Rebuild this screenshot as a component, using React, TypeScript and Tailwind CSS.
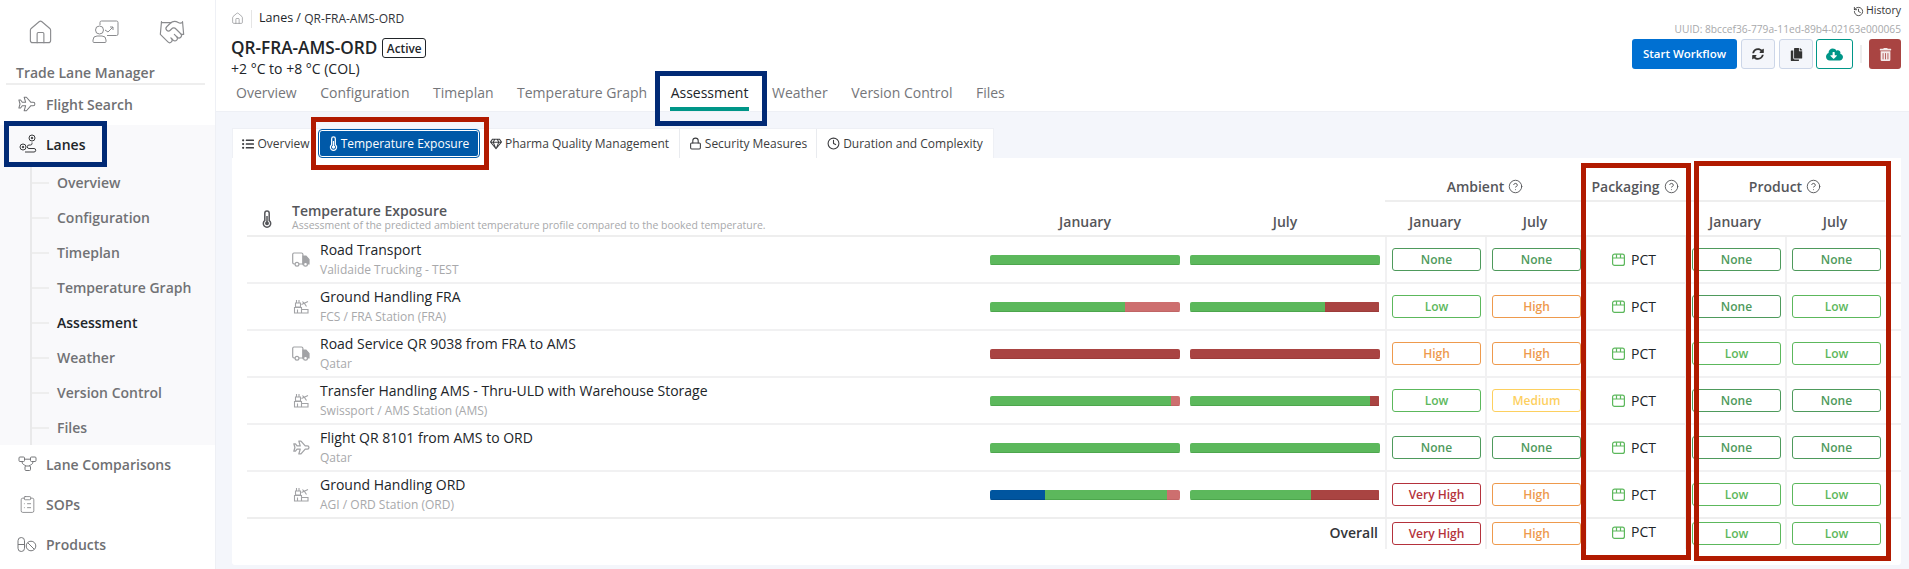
import React from "react";
import { Home, Handshake, Clock, Lock, History, CircleHelp, ClipboardList } from "lucide-react";
import { FaSyncAlt, FaCopy, FaTrashAlt, FaCloudDownloadAlt, FaListUl, FaRegGem } from "react-icons/fa";

const PresentIcon = () => (
  <svg width="28" height="24" viewBox="0 0 28 24" fill="none" stroke="#8a8b8e" strokeWidth="1">
    <path d="M8 5V2.500A1.500 1.500 0 0 1 9.500 1h15A1.500 1.500 0 0 1 26 2.500V14a1.500 1.500 0 0 1-1.500 1.500H15" />
    <circle cx="7.500" cy="10" r="4" />
    <path d="M1 21.500v-1.500a4 4 0 0 1 4-4h5a4 4 0 0 1 4 4v1.500a1 1 0 0 1-1 1H2a1 1 0 0 1-1-1z" />
    <path d="M13 10l3 2 5-5M18 7h3v3" />
  </svg>
);
const RouteIcon = () => (
  <svg width="18" height="20" viewBox="0 0 18 20" fill="none" stroke="#3a3b3d" strokeWidth="1">
    <circle cx="13" cy="4" r="3" />
    <circle cx="13" cy="4" r="0.800" fill="#3a3b3d" />
    <circle cx="4" cy="13" r="3" />
    <circle cx="4" cy="13" r="0.800" fill="#3a3b3d" />
    <path d="M13 8.500v1a1.500 1.500 0 0 1-1.500 1.500H10a1.500 1.500 0 0 0 0 3.500h5a1.500 1.500 0 0 1 0 3.500H6" />
  </svg>
);
const NodesIcon = () => (
  <svg width="19" height="16" viewBox="0 0 19 16" fill="none" stroke="#77787b" strokeWidth="1">
    <rect x="1" y="1" width="5.500" height="4.500" rx="1" />
    <rect x="12.500" y="1" width="5.500" height="4.500" rx="1" />
    <rect x="7" y="10" width="5.500" height="4.500" rx="1" />
    <path d="M6.500 3.200h6M4 5.500c0 3 2 3 4 4.500M15 5.500c0 3-2 3-4 4.500" />
  </svg>
);
const PillsIcon = () => (
  <svg width="20" height="15" viewBox="0 0 20 15" fill="none" stroke="#77787b" strokeWidth="1">
    <rect x="1" y="0.500" width="6.500" height="14" rx="3.250" />
    <path d="M1 7.500h6.500" />
    <circle cx="14" cy="9" r="4.800" />
    <path d="M10.700 5.700l6.600 6.600" />
  </svg>
);
const GroundIcon = () => (
  <svg width="16" height="15" viewBox="0 0 16 15" fill="none" stroke="#a2a3a6" strokeWidth="1.100">
    <path d="M3.500 1v3M6 1v3M2.500 4h5v4h-5zM1.500 8.500h7V14h-7zM8.500 10.500h6.500V14H8.500zM4.500 10.500v3.500M8.500 5.500l6.500-3M11 4.300L9.500 2.500M11.500 4.500L13.500 7.500" />
  </svg>
);
const TruckIcon = () => (
  <svg width="18" height="15" viewBox="0 0 18 15" fill="none" stroke="#a2a3a6" strokeWidth="1.200">
    <path d="M3 12H2A1.400 1.400 0 0 1 .7 10.600V2.300A1.400 1.400 0 0 1 2 1h7.500a1.400 1.400 0 0 1 1.400 1.300V12H7" />
    <path d="M11 4h3l3 3.500V12h-1.500l-.5-1h-3l-1 1z" fill="#a2a3a6" />
    <circle cx="5" cy="12.300" r="1.900" fill="#ffffff" />
    <circle cx="13.500" cy="12.300" r="1.900" fill="#ffffff" />
  </svg>
);
const PlaneIcon = ({ color = "#a2a3a6", sw = 1.200, w = 17, h = 15 }: { color?: string; sw?: number; w?: number; h?: number }) => (
  <svg width={w} height={h} viewBox="0 0 16 14" fill="none" stroke={color} strokeWidth={sw} strokeLinejoin="round">
    <path d="M.8 3.500h1.500l1.500 2h3L5.500 1h2l4 4.500h2a1.500 1.500 0 0 1 0 3h-2l-4 4.500h-2L6.800 8.500h-3l-1.500 2H.8l1-3.500z" />
  </svg>
);
const PctIcon = () => (
  <svg width="13" height="13" viewBox="0 0 13 13" fill="none" stroke="#5cb85c" strokeWidth="1.200">
    <rect x="0.600" y="1.200" width="11.800" height="11.200" rx="2" />
    <path d="M0.600 5h11.800M4.500 1.200V5M8.500 1.200V5" />
  </svg>
);
const Thermo = ({ color, w, h }: { color: string; w: number; h: number }) => (
  <svg width={w} height={h} viewBox="0 0 10 18" fill="none" stroke={color} strokeWidth="1.500">
    <path d="M2.800 10.500V3.200a2.200 2.200 0 0 1 4.400 0v7.300a3.700 3.700 0 1 1-4.400 0z" />
    <path d="M5 6v7" />
    <circle cx="5" cy="13.300" r="1.200" fill={color} />
  </svg>
);

const sub = ["Overview", "Configuration", "Timeplan", "Temperature Graph", "Assessment", "Weather", "Version Control", "Files"];

function Sidebar() {
  return (
    <aside className="w-[216px] shrink-0 bg-white border-r border-[#eef0f5] h-[569px] flex flex-col overflow-hidden">
      <div className="flex h-[60px] items-center pl-[27px] pt-1 gap-[38px] text-[#8a8b8e]">
        <Home size={27} strokeWidth={1} />
        <PresentIcon />
        <Handshake size={28} strokeWidth={1} />
      </div>
      <div className="ml-[6px] mr-[10px]">
        <div className="h-[25px] pl-[10px] text-[14px] leading-[26px] font-semibold text-[#707174] border-b-2 border-[#eeeeee]">Trade Lane Manager</div>
      </div>
      <div className="h-[40px] pb-[2px] flex items-center pl-[18px] gap-[10px] text-[14px] font-semibold text-[#6f7073]">
        <PlaneIcon color="#77787b" sw={0.900} w={18} h={16} />
        <span>Flight Search</span>
      </div>
      <div className="bg-[#f9f9fb] h-[320px] flex flex-col">
        <div className="h-[40px] pb-[2px] flex items-center pl-[19px] gap-[9px] text-[14px] font-semibold text-[#212529]">
          <RouteIcon />
          <span>Lanes</span>
        </div>
        <div className="ml-[30px] border-l-2 border-[#e9e9ea] flex flex-col h-[280px]">
          {sub.map((s) => (
            <div key={s} className="h-[35px] flex items-center gap-2 shrink-0">
              <span className="w-[17px] h-[2px] bg-[#eeeeee]" />
              <span className={"text-[14px] font-semibold " + (s === "Assessment" ? "text-[#212529]" : "text-[#717275]")}>{s}</span>
            </div>
          ))}
        </div>
      </div>
      {[
        { t: "Lane Comparisons", i: <NodesIcon /> },
        { t: "SOPs", i: <ClipboardList size={19} strokeWidth={1} color="#77787b" /> },
        { t: "Products", i: <PillsIcon /> },
      ].map((x) => (
        <div key={x.t} className="h-[40px] pb-[2px] shrink-0 flex items-center text-[14px] font-semibold text-[#6f7073]">
          <span className="w-[46px] flex justify-center pl-[8px]">{x.i}</span>
          <span>{x.t}</span>
        </div>
      ))}
    </aside>
  );
}

const tabs = ["Overview", "Configuration", "Timeplan", "Temperature Graph", "Assessment", "Weather", "Version Control", "Files"];

function Header() {
  return (
    <header className="h-[112px] bg-white border-b border-[#eef0f5] flex justify-between pl-[15px] pr-2 shrink-0 relative">
      <div className="flex flex-col">
        <div className="h-[38px] flex items-center text-[12.5px] text-[#212529]">
          <Home size={13} strokeWidth={1.200} color="#85868a" />
          <span className="w-px h-[18px] bg-[#e5e5e5] mx-[7px]" />
          <span className="font-medium">Lanes /&nbsp;</span>
          <span className="text-[12px] text-[#33353a]">QR-FRA-AMS-ORD</span>
        </div>
        <div className="flex items-center gap-[5px] h-[21px]">
          <span className="text-[17.2px] font-semibold text-[#212529]">QR-FRA-AMS-ORD</span>
          <span className="border border-[#212529] rounded-[3px] h-[20px] px-[3.500px] text-[11.800px] leading-[18px] font-semibold text-[#212529]">Active</span>
        </div>
        <div className="text-[14px] leading-[20px] mt-[1px] text-[#212529]">+2 °C to +8 °C (COL)</div>
        <nav className="flex mt-[1px] h-[31px] text-[14px] text-[#75767a]">
          {tabs.map((t) => (
            <div key={t} className="px-[5px] mr-[13.500px] h-[31px] flex flex-col leading-[26px]">
              <span className={"text-center " + (t === "Assessment" ? "text-[#212529]" : "")}>{t}</span>
              {t === "Assessment" && <span className="h-[4px] bg-[#009688] mt-[1px] -mx-[1px]" />}
            </div>
          ))}
        </nav>
      </div>
      <div className="flex flex-col items-end">
        <div className="h-[20px] flex items-center gap-[2px] text-[10.5px] text-[#333] mt-[1px]">
          <History size={11} strokeWidth={1.800} />
          <span>History</span>
        </div>
        <div className="text-[10.200px] leading-[16px] text-[#a8a9ab]">UUID: 8bccef36-779a-11ed-89b4-02163e000065</div>
        <div className="flex items-center mt-[2px] h-[30px]">
          <button className="w-[105px] h-[30px] bg-[#0070d2] rounded-[3px] text-white text-[11.5px] font-semibold mr-1">Start Workflow</button>
          <button className="w-[34px] h-[30px] bg-[#f4f6fb] border border-[#ccd6e8] rounded-[3px] flex items-center justify-center mr-1"><FaSyncAlt size={12} color="#333" /></button>
          <button className="w-[34px] h-[30px] bg-[#f4f6fb] border border-[#ccd6e8] rounded-[3px] flex items-center justify-center mr-[3px]"><FaCopy size={13} color="#333" /></button>
          <button className="w-[37px] h-[30px] bg-white border border-[#009688] rounded-[3px] flex items-center justify-center"><FaCloudDownloadAlt size={17} color="#009688" /></button>
          <span className="w-[2px] h-[18px] bg-[#eeeeee] mx-[7px]" />
          <button className="w-[32px] h-[30px] bg-[#a94442] rounded-[3px] flex items-center justify-center"><FaTrashAlt size={13} color="#f4e9e9" /></button>
        </div>
      </div>
    </header>
  );
}

function SubTabs() {
  const Item = ({ icon, label, w, border = true }: { icon: React.ReactNode; label: string; w: string; border?: boolean }) => (
    <div className={"flex items-center justify-center gap-[3px] h-full " + w + (border ? " border-r border-[#e9ebef]" : "")}>
      {icon}
      <span>{label}</span>
    </div>
  );
  return (
    <div className="flex h-[30px] w-[762px] bg-white border border-[#eef0f5] border-b-0 items-center text-[12px] text-[#3c3d40]">
      <Item icon={<FaListUl size={12} />} label="Overview" w="w-[86px]" border={false} />
      <div className="w-[160px] h-[27px] mr-px bg-[#0059a8] rounded-[3px] border border-white outline-1 outline-[#0059a8] text-white flex items-center justify-center gap-[3px] text-[12px] font-medium">
        <Thermo color="#ffffff" w={9} h={15} />
        <span>Temperature Exposure</span>
      </div>
      <Item icon={<FaRegGem size={12} />} label="Pharma Quality Management" w="w-[200px]" />
      <Item icon={<Lock size={13} />} label="Security Measures" w="w-[137px]" />
      <Item icon={<Clock size={13} />} label="Duration and Complexity" w="w-[176px]" border={false} />
    </div>
  );
}

type Level = "None" | "Low" | "Medium" | "High" | "Very High";
const levelClass: Record<Level, string> = {
  None: "border-[#4e9a5c] text-[#4e9a5c]",
  Low: "border-[#5cb85c] text-[#5cb85c]",
  Medium: "border-[#fdd05f] text-[#fdd05f]",
  High: "border-[#ee9a4d] text-[#ee9a4d]",
  "Very High": "border-[#b4323c] text-[#b4323c]",
};

const Badge = ({ l }: { l: Level }) => (
  <div className={"w-[89px] h-[23px] border rounded-[3px] flex items-center justify-center text-[12px] font-semibold " + levelClass[l]}>{l}</div>
);

const LevelCell = ({ l, overall }: { l: Level; overall?: boolean }) => (
  <div className={"border-l-2 border-[#f1f1f2] pl-[5px] flex " + (overall ? "items-start pt-[3px]" : "items-center")}>
    <Badge l={l} />
  </div>
);

const PctCell = ({ overall }: { overall?: boolean }) => (
  <div className={"border-l-2 border-[#f1f1f2] pr-[4px] flex justify-center gap-[6px] text-[14px] text-[#212529] " + (overall ? "items-start pt-[3px] leading-[20px]" : "items-center")}>
    <span className={overall ? "pt-[4px]" : ""}><PctIcon /></span>
    <span>PCT</span>
  </div>
);

type Seg = [string, number];
const G = "bg-[#5cb85c] border-b border-[#4da64d]";
const R = "bg-[#a94442] border-b border-[#9c3c3a]";
const L = "bg-[#cd6f6f] border-b border-[#c06565]";
const B = "bg-[#00559f] border-b border-[#004a8c]";

const Bar = ({ segs }: { segs: Seg[] }) => (
  <div className="px-[5px] flex items-center">
    <div className="w-[190px] h-[10px] flex rounded-[2px] overflow-hidden">
      {segs.map(([c, w], i) => (
        <div key={i} className={c + " h-full"} style={{ width: w }} />
      ))}
    </div>
  </div>
);

type RowData = { icon: React.ReactNode; t: string; s: string; jan: Seg[]; jul: Seg[]; lv: [Level, Level, Level, Level] };
const truck = <TruckIcon />;
const ground = <GroundIcon />;
const plane = <PlaneIcon />;

const rows: RowData[] = [
  { icon: truck, t: "Road Transport", s: "Validaide Trucking - TEST", jan: [[G, 190]], jul: [[G, 190]], lv: ["None", "None", "None", "None"] },
  { icon: ground, t: "Ground Handling FRA", s: "FCS / FRA Station (FRA)", jan: [[G, 135], [L, 55]], jul: [[G, 135], [R, 54]], lv: ["Low", "High", "None", "Low"] },
  { icon: truck, t: "Road Service QR 9038 from FRA to AMS", s: "Qatar", jan: [[R, 190]], jul: [[R, 190]], lv: ["High", "High", "Low", "Low"] },
  { icon: ground, t: "Transfer Handling AMS - Thru-ULD with Warehouse Storage", s: "Swissport / AMS Station (AMS)", jan: [[G, 181], [L, 9]], jul: [[G, 180], [R, 9]], lv: ["Low", "Medium", "None", "None"] },
  { icon: plane, t: "Flight QR 8101 from AMS to ORD", s: "Qatar", jan: [[G, 190]], jul: [[G, 190]], lv: ["None", "None", "None", "None"] },
  { icon: ground, t: "Ground Handling ORD", s: "AGI / ORD Station (ORD)", jan: [[B, 55], [G, 122], [L, 13]], jul: [[G, 121], [R, 68]], lv: ["Very High", "High", "Low", "Low"] },
];

const gridCols = "grid grid-cols-[738px_200px_200px_100px_100px_100px_100px_100px]";
const Help = () => <CircleHelp size={15} strokeWidth={1.500} color="#55565a" />;

function Table() {
  return (
    <div className="text-[#212529]">
      <div className={gridCols + " grid-rows-[32px_34px] h-[67px] border-b-2 border-[#eeeeee] font-semibold text-[#55565a] text-[14px]"}>
        <div className="row-span-2 col-start-1 flex items-end pb-[3px] pl-[15px]">
          <span className="mb-[5px] mr-[20px] shrink-0"><Thermo color="#55565a" w={10} h={18} /></span>
          <div className="flex flex-col">
            <span className="text-[14px] leading-[20px]">Temperature Exposure</span>
            <span className="text-[10.500px] leading-[9px] pb-[3px] font-normal text-[#a8a9ab]">Assessment of the predicted ambient temperature profile compared to the booked temperature.</span>
          </div>
        </div>
        <div className="row-span-2 flex items-end justify-center pb-[4px]">January</div>
        <div className="row-span-2 flex items-end justify-center pb-[4px]">July</div>
        <div className="col-span-2 border-b-2 border-[#eeeeee] flex items-center justify-center gap-1 pt-[2px]">Ambient <Help /></div>
        <div className="border-b-2 border-[#eeeeee] flex items-center justify-center gap-1 pt-[2px]">Packaging <Help /></div>
        <div className="col-span-2 border-b-2 border-[#eeeeee] flex items-center justify-center gap-1 pt-[2px]">Product <Help /></div>
        <div className="col-start-4 flex items-center justify-center pt-[4px]">January</div>
        <div className="flex items-center justify-center pt-[4px]">July</div>
        <div />
        <div className="flex items-center justify-center pt-[4px]">January</div>
        <div className="flex items-center justify-center pt-[4px]">July</div>
      </div>
      {rows.map((r, i) => (
        <div key={r.t} className={gridCols + " h-[47px] border-b-2 " + (i === rows.length - 1 ? "border-[#eeeeee]" : "border-[#f1f1f2]")}>
          <div className="flex items-center">
            <span className="w-[73px] pl-[43px] pr-[8px] flex justify-center shrink-0 box-border">{r.icon}</span>
            <div className="flex flex-col">
              <span className="text-[14px] leading-[20px] mt-[1px]">{r.t}</span>
              <span className="text-[12px] leading-[20px] text-[#a8a9ab]">{r.s}</span>
            </div>
          </div>
          <Bar segs={r.jan} />
          <Bar segs={r.jul} />
          <LevelCell l={r.lv[0]} />
          <LevelCell l={r.lv[1]} />
          <PctCell />
          <LevelCell l={r.lv[2]} />
          <LevelCell l={r.lv[3]} />
        </div>
      ))}
      <div className={gridCols + " h-[30px]"}>
        <div className="col-span-3 text-right pr-[7px] text-[14px] leading-[28px] font-semibold text-[#33353a]">Overall</div>
        <LevelCell l="Very High" overall />
        <LevelCell l="High" overall />
        <PctCell overall />
        <LevelCell l="Low" overall />
        <LevelCell l="Low" overall />
      </div>
    </div>
  );
}

export default function App() {
  const red = "absolute border-[5px] border-[#b11a00] pointer-events-none";
  const navy = "absolute border-[5px] border-[#012a75] pointer-events-none";
  return (
    <div className="relative w-[1909px] h-[569px] overflow-hidden flex bg-[#f4f6fb] [font-family:'Open_Sans',sans-serif]">
      <Sidebar />
      <main className="flex-1 flex flex-col min-w-0">
        <Header />
        <div className="pl-4 pt-[16px]">
          <SubTabs />
          <div className="w-[1669px] h-[407px] bg-white rounded-b-[3px] pl-[15px] pt-[12px]">
            <Table />
          </div>
        </div>
      </main>
      <div className={navy + " left-[4px] top-[121px] w-[103px] h-[46px]"} />
      <div className={navy + " left-[655px] top-[71px] w-[112px] h-[55px]"} />
      <div className={red + " left-[311px] top-[117px] w-[178px] h-[53px]"} />
      <div className={red + " left-[1581px] top-[163px] w-[110px] h-[397px]"} />
      <div className={red + " left-[1694px] top-[161px] w-[197px] h-[400px]"} />
    </div>
  );
}
